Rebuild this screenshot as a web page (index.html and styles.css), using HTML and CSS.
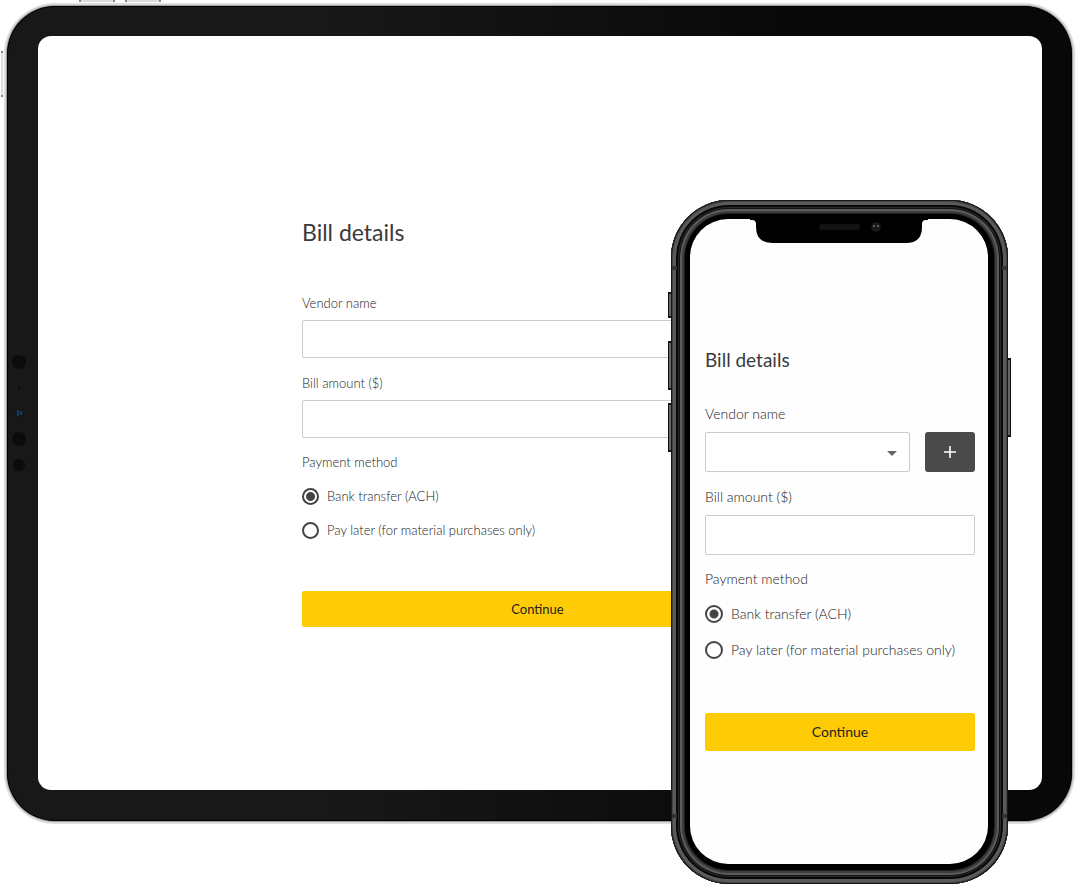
FILE: index.html
```html
<!DOCTYPE html>
<html lang="en">
<head>
    <meta charset="UTF-8">
    <meta name="viewport" content="width=device-width, initial-scale=1.0">
    <title>Bill details</title>
    <link rel="stylesheet" href="styles.css">
</head>
<body>
    <main class="devices">
        <section class="tablet">
            <span class="tablet-key key-up"></span>
            <span class="tablet-key key-down"></span>
            <span class="tablet-side"></span>
            <svg class="tablet-sensors" width="18" height="120" viewBox="0 0 18 120" aria-hidden="true">
                <circle cx="9" cy="10" r="7" fill="#0b0b0b"/>
                <circle cx="9" cy="36" r="1" fill="#050505"/>
                <circle cx="9" cy="61" r="4" fill="#101820"/>
                <path d="M8 58v6M11 59v4" stroke="#1b3c5c" stroke-width="2"/>
                <circle cx="9" cy="87" r="7" fill="#0b0b0b"/>
                <circle cx="9" cy="113" r="6" fill="#0b0b0b"/>
            </svg>
            <div class="tablet-screen">
                <form class="bill-form">
                    <h1>Bill details</h1>
                    <div class="field">
                        <label for="vendor">Vendor name</label>
                        <input type="text" id="vendor">
                    </div>
                    <div class="field">
                        <label for="amount">Bill amount ($)</label>
                        <input type="text" id="amount">
                    </div>
                    <fieldset class="methods">
                        <legend>Payment method</legend>
                        <label class="option"><input type="radio" name="method" checked>Bank transfer (ACH)</label>
                        <label class="option"><input type="radio" name="method">Pay later (for material purchases only)</label>
                    </fieldset>
                    <button type="button" class="continue">Continue</button>
                </form>
            </div>
        </section>

        <section class="phone">
            <span class="phone-key mute"></span>
            <span class="phone-key volume-up"></span>
            <span class="phone-key volume-down"></span>
            <span class="phone-key power"></span>
            <span class="band band-top"></span>
            <span class="band band-bottom"></span>
            <div class="phone-screen">
                <svg class="notch" width="178" height="25" viewBox="0 0 178 25" aria-hidden="true">
                    <path d="M0 0H178V1H176Q172 1 172 5V8Q172 24 156 24H22Q6 24 6 8V5Q6 1 2 1H0Z" fill="#000"/>
                    <rect x="69" y="5" width="41" height="6" rx="2" fill="#121212"/>
                    <circle cx="126" cy="8" r="5" fill="#171717"/>
                    <circle cx="124" cy="7" r="1" fill="#777"/>
                    <circle cx="128" cy="7" r="1" fill="#777"/>
                </svg>
                <form class="bill-form compact">
                    <h2>Bill details</h2>
                    <div class="field">
                        <label for="vendor-select">Vendor name</label>
                        <div class="vendor-row">
                            <div class="select-box">
                                <select id="vendor-select"></select>
                                <svg class="arrow" width="10" height="5" viewBox="0 0 10 5" aria-hidden="true">
                                    <path d="M0 0H10L5 5Z" fill="#666"/>
                                </svg>
                            </div>
                            <button type="button" class="add" aria-label="Add vendor">
                                <svg width="14" height="14" viewBox="0 0 14 14" aria-hidden="true">
                                    <path d="M7 1V13M1 7H13" stroke="#fff" stroke-width="1.6"/>
                                </svg>
                            </button>
                        </div>
                    </div>
                    <div class="field">
                        <label for="phone-amount">Bill amount ($)</label>
                        <input type="text" id="phone-amount">
                    </div>
                    <fieldset class="methods">
                        <legend>Payment method</legend>
                        <label class="option"><input type="radio" name="phone-method" checked>Bank transfer (ACH)</label>
                        <label class="option"><input type="radio" name="phone-method">Pay later (for material purchases only)</label>
                    </fieldset>
                    <button type="button" class="continue">Continue</button>
                </form>
            </div>
        </section>
    </main>
</body>
</html>
```
FILE: styles.css
```css
* {
    box-sizing: border-box;
}
body {
    margin: 0;
    background: #fff;
    color: #222;
    font-family: Lato, "Open Sans", sans-serif;
    font-size: 13px;
    font-weight: 300;
    line-height: 20px;
}

/* both devices share one grid cell, the phone stands in front */
.devices {
    display: grid;
    align-items: start;
}
.tablet,
.phone {
    grid-area: 1 / 1;
    position: relative;
}

/* tablet */
.tablet {
    margin: 6px 6px 0 7px;
    padding: 30px 30px 31px 31px;
    border-radius: 48px;
    background: linear-gradient(to right, #181818 30%, #080808 75%);
    box-shadow: inset 0 0 0 1px #000, 0 0 1px 1px #999, 0 0 1px 3px #ddd;
}
.tablet-screen {
    padding: 180px 269px 163px 264px;
    border-radius: 13px;
    background: #fff;
}
.tablet-key,
.tablet-side {
    position: absolute;
    background: #ddd;
}
.tablet-key {
    top: -6px;
    width: 36px;
    height: 2px;
    border: solid #888;
    border-width: 0 2px;
}
.key-up {
    left: 72px;
}
.key-down {
    left: 118px;
}
.tablet-side {
    top: 45px;
    left: -6px;
    width: 2px;
    height: 46px;
    border: solid #888;
    border-width: 2px 0;
}
.tablet-sensors {
    position: absolute;
    top: 346px;
    left: 3px;
}

/* phone */
.phone {
    justify-self: end;
    width: 337px;
    margin: 200px 70px 2px 0;
    padding: 19px 20px 20px 19px;
    border-radius: 58px;
    background: #000;
    box-shadow:
        inset 0 0 0 1px #181818,
        inset 0 0 0 2px #444,
        inset 0 0 0 5px #5a5a5a,
        inset 0 0 0 7px #080808,
        inset 0 0 0 8px #2a2a2a,
        inset 0 0 0 9px #111,
        inset 0 0 0 11px #5c5c5c,
        inset 0 0 0 13px #3c3c3c,
        inset 0 0 0 14px #1c1c1c;
}
.phone-screen {
    position: relative;
    padding: 127px 13px 113px 15px;
    border-radius: 38px;
    background: #fefefe;
}
.notch {
    position: absolute;
    top: 0;
    left: 50%;
    margin-left: -89px;
}
.phone-key {
    position: absolute;
    left: -3px;
    width: 3px;
    border: solid #111;
    border-width: 2px 0 2px 1px;
    background: #666;
}
.mute {
    top: 92px;
    height: 26px;
}
.volume-up {
    top: 141px;
    height: 49px;
}
.volume-down {
    top: 203px;
    height: 49px;
}
.power {
    top: 158px;
    left: auto;
    right: -3px;
    height: 79px;
    border-width: 2px 1px 2px 0;
}
.band {
    position: absolute;
    left: 1px;
    right: 1px;
    height: 4px;
    border: solid #333;
    border-width: 0 5px;
}
.band-top {
    top: 66px;
}
.band-bottom {
    bottom: 66px;
}

/* bill form */
h1,
h2 {
    margin: 0 0 45px;
    color: #3a3a3a;
    font-size: 23px;
    font-weight: 400;
    line-height: 32px;
}
.field {
    margin-bottom: 15px;
}
.field > label {
    display: block;
    margin-bottom: 7px;
}
input[type="text"],
select {
    display: block;
    width: 100%;
    height: 38px;
    padding: 0 10px;
    border: 1px solid #ccc;
    border-radius: 2px;
    background: #fff;
    font: inherit;
    color: inherit;
}
.methods {
    display: flex;
    flex-direction: column;
    gap: 10px;
    margin: 0;
    padding: 0;
    border: 0;
}
legend {
    margin-bottom: 13px;
    padding: 0;
    line-height: 18px;
}
.option {
    display: flex;
    align-items: center;
    gap: 8px;
    height: 24px;
    white-space: nowrap;
}
input[type="radio"] {
    appearance: none;
    flex: none;
    width: 17px;
    height: 17px;
    margin: 0;
    border: 2px solid #444;
    border-radius: 50%;
    background: #fff;
}
input[type="radio"]:checked {
    background: radial-gradient(circle, #444 4px, #fff 5px);
}
.continue {
    display: block;
    width: 100%;
    height: 36px;
    margin-top: 49px;
    padding: 0;
    border: 0;
    border-radius: 2px;
    background: #ffcb05;
    color: #222;
    font: inherit;
    font-weight: 400;
    cursor: pointer;
}

/* phone version of the form */
.compact {
    font-size: 14px;
}
.compact h2 {
    margin-bottom: 30px;
    font-size: 19px;
    line-height: 28px;
}
.compact .field > label {
    margin-bottom: 8px;
}
.compact input[type="text"],
.compact select {
    height: 40px;
}
.compact .methods {
    gap: 12px;
}
.compact legend {
    margin-bottom: 14px;
}
.compact input[type="radio"] {
    width: 18px;
    height: 18px;
}
.compact .continue {
    height: 38px;
    margin-top: 51px;
}
.vendor-row {
    display: flex;
    gap: 15px;
}
.select-box {
    position: relative;
    flex: 1;
}
.select-box select {
    appearance: none;
}
.arrow {
    position: absolute;
    top: 19px;
    right: 13px;
    pointer-events: none;
}
.add {
    display: flex;
    align-items: center;
    justify-content: center;
    width: 50px;
    height: 40px;
    padding: 0;
    border: 0;
    border-radius: 3px;
    background: #4a4a4a;
    cursor: pointer;
}
```
